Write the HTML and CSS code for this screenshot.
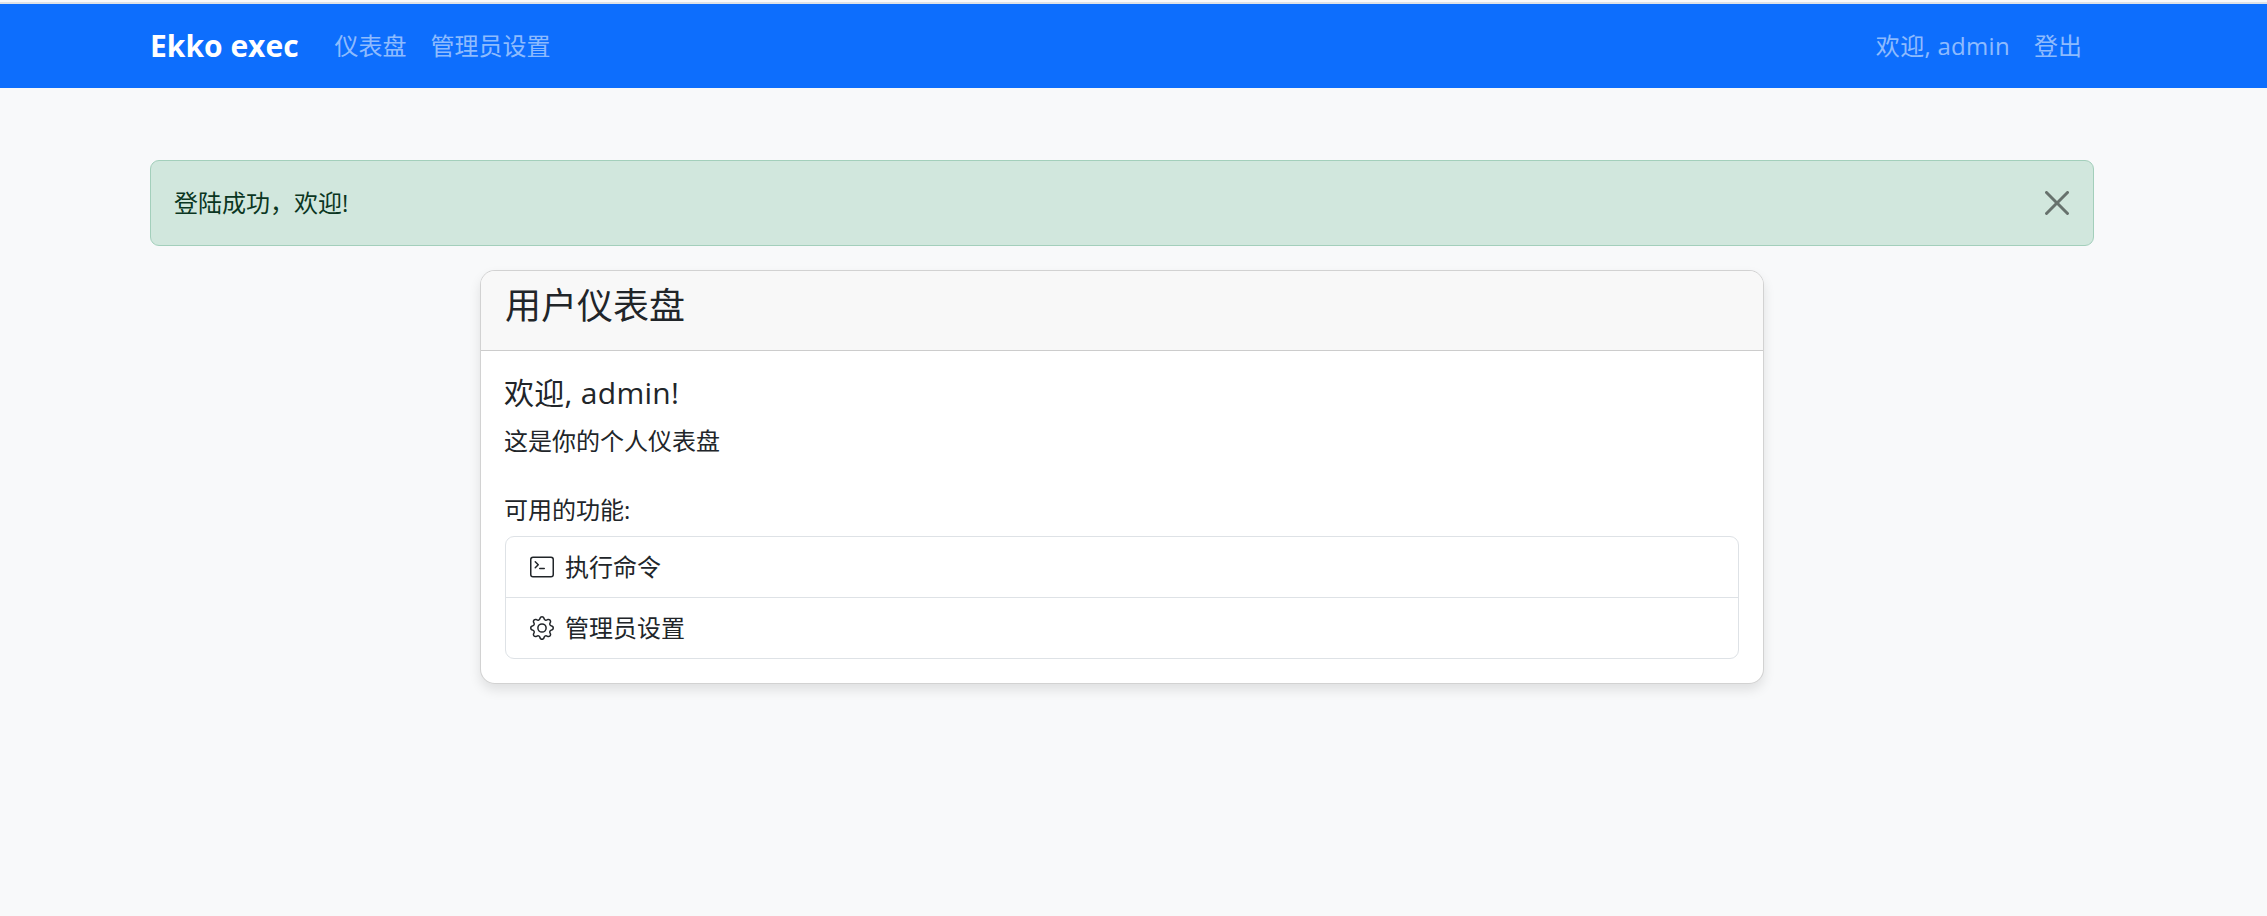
FILE: index.html
```html
<!DOCTYPE html>
<html lang="zh-CN">
<head>
    <meta charset="UTF-8">
    <title>用户仪表盘 - Ekko exec</title>
    <link rel="stylesheet" href="styles.css">
</head>
<body>
    <div class="top-edge"></div>
    <nav class="navbar">
        <div class="container nav-inner">
            <a href="#" class="brand">Ekko exec</a>
            <div class="nav-links">
                <a href="#" class="nav-link">仪表盘</a>
                <a href="#" class="nav-link">管理员设置</a>
            </div>
            <div class="nav-links nav-right">
                <span class="nav-link nav-greet">欢迎, admin</span>
                <a href="#" class="nav-link">登出</a>
            </div>
        </div>
    </nav>
    <main class="container main-container">
        <div class="alert">
            <span>登陆成功，欢迎!</span>
            <button type="button" class="btn-close" aria-label="Close">
                <svg viewBox="0 0 16 16" width="24" height="24" fill="currentColor"><path d="M.293.293a1 1 0 011.414 0L8 6.586 14.293.293a1 1 0 111.414 1.414L9.414 8l6.293 6.293a1 1 0 01-1.414 1.414L8 9.414l-6.293 6.293a1 1 0 01-1.414-1.414L6.586 8 .293 1.707a1 1 0 010-1.414z"/></svg>
            </button>
        </div>
        <div class="card">
            <div class="card-header">
                <h4>用户仪表盘</h4>
            </div>
            <div class="card-body">
                <h5>欢迎, admin!</h5>
                <p>这是你的个人仪表盘</p>
                <h6>可用的功能:</h6>
                <div class="list-group">
                    <a href="#" class="list-item">
                        <svg viewBox="0 0 16 16" width="24" height="24" fill="currentColor"><path d="M6 9a.5.5 0 0 1 .5-.5h3a.5.5 0 0 1 0 1h-3A.5.5 0 0 1 6 9zM3.854 4.146a.5.5 0 1 0-.708.708L4.793 6.5 3.146 8.146a.5.5 0 1 0 .708.708l2-2a.5.5 0 0 0 0-.708l-2-2z"/><path d="M2 1a2 2 0 0 0-2 2v10a2 2 0 0 0 2 2h12a2 2 0 0 0 2-2V3a2 2 0 0 0-2-2H2zm12 1a1 1 0 0 1 1 1v10a1 1 0 0 1-1 1H2a1 1 0 0 1-1-1V3a1 1 0 0 1 1-1h12z"/></svg>
                        执行命令
                    </a>
                    <a href="#" class="list-item">
                        <svg viewBox="0 0 16 16" width="24" height="24" fill="currentColor"><path d="M8 4.754a3.246 3.246 0 1 0 0 6.492 3.246 3.246 0 0 0 0-6.492zM5.754 8a2.246 2.246 0 1 1 4.492 0 2.246 2.246 0 0 1-4.492 0z"/><path d="M9.796 1.343c-.527-1.79-3.065-1.79-3.592 0l-.094.319a.873.873 0 0 1-1.255.52l-.292-.16c-1.64-.892-3.433.902-2.54 2.541l.159.292a.873.873 0 0 1-.52 1.255l-.319.094c-1.79.527-1.79 3.065 0 3.592l.319.094a.873.873 0 0 1 .52 1.255l-.16.292c-.892 1.64.901 3.434 2.541 2.54l.292-.159a.873.873 0 0 1 1.255.52l.094.319c.527 1.79 3.065 1.79 3.592 0l.094-.319a.873.873 0 0 1 1.255-.52l.292.16c1.64.893 3.434-.902 2.54-2.541l-.159-.292a.873.873 0 0 1 .52-1.255l.319-.094c1.79-.527 1.79-3.065 0-3.592l-.319-.094a.873.873 0 0 1-.52-1.255l.16-.292c.893-1.64-.902-3.433-2.541-2.54l-.292.159a.873.873 0 0 1-1.255-.52l-.094-.319zm-2.633.283c.246-.835 1.428-.835 1.674 0l.094.319a1.873 1.873 0 0 0 2.693 1.115l.291-.16c.764-.415 1.6.42 1.184 1.185l-.159.292a1.873 1.873 0 0 0 1.116 2.692l.318.094c.835.246.835 1.428 0 1.674l-.319.094a1.873 1.873 0 0 0-1.115 2.693l.16.291c.415.764-.42 1.6-1.185 1.184l-.291-.159a1.873 1.873 0 0 0-2.693 1.116l-.094.318c-.246.835-1.428.835-1.674 0l-.094-.319a1.873 1.873 0 0 0-2.692-1.115l-.292.16c-.764.415-1.6-.42-1.184-1.185l.159-.291A1.873 1.873 0 0 0 1.945 8.93l-.319-.094c-.835-.246-.835-1.428 0-1.674l.319-.094A1.873 1.873 0 0 0 3.06 4.377l-.16-.292c-.415-.764.42-1.6 1.185-1.184l.292.159a1.873 1.873 0 0 0 2.692-1.115l.094-.319z"/></svg>
                        管理员设置
                    </a>
                </div>
            </div>
        </div>
    </main>
</body>
</html>
```
FILE: styles.css
```css
html, body {
    height: 100%;
}

body {
    margin: 0;
    padding: 2px 0 0;
    box-sizing: border-box;
    background-color: #f8f9fa;
    color: #212529;
    font-family: "Open Sans", "Noto Sans CJK SC", sans-serif;
    font-size: 24px;
    line-height: 36px;
}

a {
    text-decoration: none;
    color: inherit;
}

.top-edge {
    height: 2px;
    background-color: #dee2e6;
}

.container {
    box-sizing: border-box;
    width: 1944px;
    margin-left: 150px;
}

.navbar {
    background-color: #0d6efd;
    height: 84px;
    display: flex;
    align-items: center;
}

.nav-inner {
    display: flex;
    align-items: center;
}

.brand {
    color: #fff;
    font-size: 30px;
    font-weight: 700;
    margin-right: 24px;
}

.nav-links {
    display: flex;
}

.nav-right {
    margin-left: auto;
}

.nav-link {
    color: rgba(255, 255, 255, 0.55);
    padding: 0 12px;
}

.nav-greet {
    letter-spacing: 0.3px;
}

.main-container {
    padding-top: 72px;
}

.alert {
    display: flex;
    align-items: center;
    justify-content: space-between;
    height: 86px;
    box-sizing: border-box;
    padding: 0 24px 0 23px;
    margin-bottom: 24px;
    background-color: #d1e7dd;
    border: 1px solid #a3cfbb;
    border-radius: 9px;
    color: #0a3622;
}

.btn-close {
    display: flex;
    padding: 0;
    border: none;
    background: transparent;
    color: #000;
    opacity: 0.5;
    cursor: pointer;
}

.card {
    width: 1284px;
    margin: 0 auto;
    box-sizing: border-box;
    background: #fff;
    border: 1px solid rgba(0, 0, 0, 0.175);
    border-radius: 15px;
    box-shadow: 0 6px 12px rgba(0, 0, 0, 0.1);
}

.card-header {
    padding: 13px 24px 11px;
    background-color: #f8f8f8;
    border-bottom: 1px solid rgba(0, 0, 0, 0.175);
    border-radius: 14px 14px 0 0;
}

.card-header h4 {
    margin: 0 0 12px;
    font-size: 36px;
    font-weight: 400;
    line-height: 43px;
}

.card-body {
    padding: 24px 24px 24px 23px;
}

.card-body h5 {
    margin: 0 0 12px;
    font-size: 30px;
    font-weight: 400;
    line-height: 36px;
    letter-spacing: 0.3px;
}

.card-body p {
    margin: 0;
}

.card-body h6 {
    margin: 36px 0 12px;
    font-size: 24px;
    font-weight: 400;
    line-height: 29px;
}

.list-group {
    margin-left: 1px;
    border: 1px solid #dee2e6;
    border-radius: 9px;
}

.list-item {
    display: flex;
    align-items: center;
    gap: 11px;
    padding: 12px 24px;
}

.list-item + .list-item {
    border-top: 1px solid #dee2e6;
}
```
